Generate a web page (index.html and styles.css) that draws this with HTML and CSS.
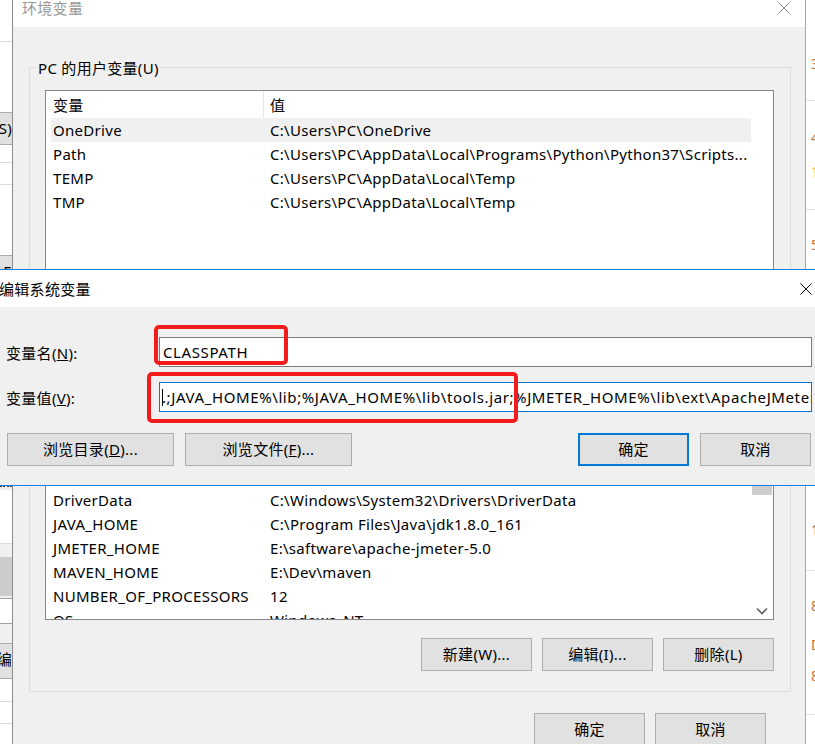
FILE: index.html
```html
<!DOCTYPE html>
<html lang="zh-CN">
<head>
    <meta charset="UTF-8">
    <title>环境变量</title>
    <link rel="stylesheet" href="styles.css">
</head>
<body>
<div class="desk">

    <!-- окно позади, слева -->
    <div class="side-left">
        <div class="sl-line" style="height:42px"></div>
        <div class="sl-gap" style="height:70px"></div>
        <div class="sl-btn" style="height:33px">(S)...</div>
        <div class="sl-line" style="height:18px"></div>
        <div class="sl-line" style="height:22px"></div>
        <div class="sl-gap" style="height:70px"></div>
        <div class="sl-btn" style="height:230px">E</div>
        <div class="sl-dots"></div>
        <div class="sl-line" style="height:54px"></div>
        <div class="sl-grey" style="height:13px"></div>
        <div class="sl-dark" style="height:41px"></div>
        <div class="sl-edit" style="height:26px"></div>
        <div class="sl-grey" style="height:19px"></div>
        <div class="sl-btn" style="height:36px">编</div>
        <div class="sl-line" style="height:23px"></div>
        <div class="sl-line" style="height:22px"></div>
    </div>

    <!-- окно позади, справа -->
    <div class="side-right">
        <div class="sr-cell" style="height:101px"><span style="top:56px">3</span></div>
        <div class="sr-cell" style="height:109px"><span style="top:29px">4</span><span class="yel" style="top:63px">1</span></div>
        <div class="sr-cell" style="height:361px"><span style="top:27px">5</span><span class="grey" style="top:312px">1</span></div>
        <div class="sr-cell" style="height:144px"><span style="top:27px">8</span><span style="top:66px">D</span><span style="top:97px">8</span></div>
    </div>

    <div class="env-win">
        <div class="env-title">
            <span>环境变量</span>
            <svg class="x-icon" width="12" height="12" viewBox="0 0 12 12"><path d="M0.5 0.5 L11.5 11.5 M11.5 0.5 L0.5 11.5" stroke="#8a8a8a" stroke-width="1"/></svg>
        </div>
        <div class="env-body">
            <div class="group">
                <div class="group-label">PC 的用户变量(U)</div>
                <div class="list list-user">
                    <div class="list-inner">
                        <div class="row head"><div>变量</div><div>值</div></div>
                        <div class="row sel"><div>OneDrive</div><div>C:\Users\PC\OneDrive</div></div>
                        <div class="row"><div>Path</div><div>C:\Users\PC\AppData\Local\Programs\Python\Python37\Scripts...</div></div>
                        <div class="row"><div>TEMP</div><div>C:\Users\PC\AppData\Local\Temp</div></div>
                        <div class="row"><div>TMP</div><div>C:\Users\PC\AppData\Local\Temp</div></div>
                    </div>
                    <div class="vscroll empty"></div>
                </div>
                <div class="btn-row">
                    <div class="btn">新建(N)...</div>
                    <div class="btn">编辑(E)...</div>
                    <div class="btn">删除(D)</div>
                </div>
            </div>

            <div class="group group-sys">
                <div class="group-label">系统变量(S)</div>
                <div class="list list-sys">
                    <div class="list-inner">
                        <div class="row head"><div>变量</div><div>值</div></div>
                        <div class="row"><div>asl.log</div><div>Destination=file</div></div>
                        <div class="row"><div>CLASSPATH</div><div>.;%JAVA_HOME%\lib;%JAVA_HOME%\lib\tools.jar</div></div>
                        <div class="row"><div>ComSpec</div><div>C:\Windows\system32\cmd.exe</div></div>
                        <div class="row"><div>DriverData</div><div>C:\Windows\System32\Drivers\DriverData</div></div>
                        <div class="row"><div>JAVA_HOME</div><div>C:\Program Files\Java\jdk1.8.0_161</div></div>
                        <div class="row"><div>JMETER_HOME</div><div>E:\saftware\apache-jmeter-5.0</div></div>
                        <div class="row"><div>MAVEN_HOME</div><div>E:\Dev\maven</div></div>
                        <div class="row"><div>NUMBER_OF_PROCESSORS</div><div>12</div></div>
                        <div class="row"><div>OS</div><div>Windows_NT</div></div>
                    </div>
                    <div class="vscroll">
                        <div class="vs-arrow"></div>
                        <div class="vs-track"><div class="vs-thumb"></div></div>
                        <div class="vs-arrow">
                            <svg width="12" height="8" viewBox="0 0 12 8"><path d="M1 1.5 L6 6.5 L11 1.5" fill="none" stroke="#606060" stroke-width="1.6"/></svg>
                        </div>
                    </div>
                </div>
                <div class="btn-row">
                    <div class="btn">新建(W)...</div>
                    <div class="btn">编辑(I)...</div>
                    <div class="btn">删除(L)</div>
                </div>
            </div>

            <div class="win-actions">
                <div class="btn">确定</div>
                <div class="btn">取消</div>
            </div>
        </div>
    </div>

    <div class="edit-dlg">
        <div class="dlg-title">
            <span>编辑系统变量</span>
            <svg class="x-icon" width="12" height="12" viewBox="0 0 12 12"><path d="M0.5 0.5 L11.5 11.5 M11.5 0.5 L0.5 11.5" stroke="#000" stroke-width="1"/></svg>
        </div>
        <div class="dlg-body">
            <div class="field">
                <label>变量名(<u>N</u>):</label>
                <div class="input">CLASSPATH</div>
            </div>
            <div class="field">
                <label>变量值(<u>V</u>):</label>
                <div class="input focus"><span class="caret"></span>.;JAVA_HOME%\lib;%JAVA_HOME%\lib\tools.jar;%JMETER_HOME%\lib\ext\ApacheJMeter_core.jar;</div>
            </div>
            <div class="dlg-buttons">
                <div class="btn wide">浏览目录(<u>D</u>)...</div>
                <div class="btn wide">浏览文件(<u>F</u>)...</div>
                <div class="spacer"></div>
                <div class="btn default">确定</div>
                <div class="btn">取消</div>
            </div>
        </div>
    </div>

    <!-- красные пометки поверх диалога -->
    <div class="mark mark-name"></div>
    <div class="mark mark-value"></div>
</div>
</body>
</html>
```

FILE: styles.css
```css
* {
    box-sizing: border-box;
}

body {
    margin: 0;
    font-family: "Noto Sans", "Noto Sans CJK SC", sans-serif;
    font-size: 15px;
    letter-spacing: 0.3px;
    color: #000;
}

.desk {
    position: relative;
    width: 815px;
    height: 744px;
    overflow: hidden;
    background: #fff;
}

/* левое окно позади */
.side-left {
    position: absolute;
    left: 0;
    top: 0;
    width: 12px;
    background: #fff;
}

    .side-left > div {
        white-space: nowrap;
        overflow: hidden;
    }

.sl-line {
    border-bottom: 1px solid #dcdcdc;
}

.sl-btn {
    background: #e1e1e1;
    border-top: 1px solid #adadad;
    border-bottom: 1px solid #adadad;
    direction: rtl;
    line-height: 31px;
    font-size: 15px;
}

.sl-dots {
    height: 5px;
    background: #f0f0f0;
    border-top: 2px dotted #3c3c3c;
}

.sl-grey {
    background: #f0f0f0;
}

.sl-dark {
    background: #cccccc;
    border-bottom: 2px solid #f0f0f0;
}

.sl-edit {
    border-top: 1px solid #a0a0a0;
    border-bottom: 1px solid #a0a0a0;
}

/* правое окно позади */
.side-right {
    position: absolute;
    left: 806px;
    top: 0;
    width: 9px;
    background: #fff;
}

.sr-cell {
    position: relative;
    border-bottom: 1px solid #e3e3e3;
}

    .sr-cell span {
        position: absolute;
        left: 5px;
        font-size: 14px;
        line-height: 16px;
        color: #c6733a;
    }

        .sr-cell span.yel {
            color: #f0c24a;
        }

        .sr-cell span.grey {
            color: #777;
        }

/* окно «环境变量» */
.env-win {
    position: absolute;
    left: 12px;
    top: 0;
    width: 794px;
    height: 780px;
    background: #f0f0f0;
    border-left: 1px solid #8c8c8c;
    border-right: 1px solid #a6a6a6;
}

.env-title {
    display: flex;
    justify-content: space-between;
    align-items: flex-start;
    height: 27px;
    padding: 0 15px 0 9px;
    background: #fff;
    color: #999;
    line-height: 16px;
}

    .env-title .x-icon {
        margin-top: 2px;
    }

.env-body {
    padding-top: 40px;
}

.group {
    margin: 0 14px 0 16px;
    padding: 0 16px 20px 15px;
    border: 1px solid #dcdcdc;
}

.group-sys {
    margin-top: 12px;
}

.group-label {
    width: fit-content;
    height: 20px;
    line-height: 20px;
    margin: -10px 0 0 -9px;
    padding: 0 2px;
    background: #f0f0f0;
}

.list {
    display: flex;
    margin-top: 12px;
    background: #fff;
    border: 1px solid #828790;
    overflow: hidden;
}

.list-user {
    height: 191px;
}

.list-sys {
    height: 232px;
}

.list-inner {
    flex: 1;
    padding-left: 5px;
    overflow: hidden;
}

.row {
    display: grid;
    grid-template-columns: 213px 1fr;
    height: 24px;
    line-height: 24px;
    white-space: nowrap;
}

    .row > div {
        overflow: hidden;
    }

        .row > div:first-child {
            padding-left: 2px;
        }

        .row > div:last-child {
            padding-left: 6px;
        }

    .row.head {
        height: 27px;
        line-height: 29px;
    }

        .row.head > div:first-child {
            border-right: 1px solid #e5e5e5;
        }

    .row.sel {
        background: #f0f0f0;
    }

.vscroll {
    display: flex;
    flex-direction: column;
    width: 22px;
    padding: 0 1px;
}

.vs-arrow {
    display: flex;
    align-items: center;
    justify-content: center;
    height: 17px;
}

.vs-track {
    flex: 1;
}

.vs-thumb {
    margin-top: 14px;
    height: 75px;
    background: #cdcdcd;
}

.btn-row {
    display: flex;
    justify-content: flex-end;
    gap: 10px;
    margin-top: 18px;
}

.btn {
    width: 111px;
    height: 33px;
    line-height: 31px;
    text-align: center;
    background: #e1e1e1;
    border: 1px solid #adadad;
    white-space: nowrap;
}

.win-actions {
    display: flex;
    justify-content: flex-end;
    gap: 10px;
    margin: 21px 39px 0 0;
}

/* диалог «编辑系统变量» */
.edit-dlg {
    position: absolute;
    left: -10px;
    top: 269px;
    width: 835px;
    border-top: 1px solid #1a7fd4;
    border-bottom: 1px solid #1a7fd4;
}

.dlg-title {
    display: flex;
    justify-content: space-between;
    align-items: center;
    height: 37px;
    padding: 0 13px 0 9px;
    background: #fff;
}

.dlg-body {
    padding: 30px 13px 19px 16px;
    background: #f0f0f0;
}

.field {
    display: grid;
    grid-template-columns: 153px 1fr;
    align-items: center;
}

    .field + .field {
        margin-top: 15px;
    }

.input {
    height: 30px;
    line-height: 28px;
    padding-left: 3px;
    background: #fff;
    border: 1px solid #7a7a7a;
    white-space: nowrap;
    overflow: hidden;
    letter-spacing: 0.6px;
}

    .input.focus {
        border-color: #0078d7;
        padding-left: 2px;
    }

.caret {
    display: inline-block;
    width: 1px;
    height: 17px;
    margin-right: -1px;
    vertical-align: -3px;
    background: #000;
}

.dlg-buttons {
    display: flex;
    margin: 21px 1px 0 1px;
}

    .dlg-buttons .wide {
        width: 167px;
        margin-right: 11px;
    }

    .dlg-buttons .spacer {
        flex: 1;
    }

    .dlg-buttons .default {
        margin-right: 11px;
        border: 2px solid #0078d7;
        line-height: 29px;
    }

/* красные рамки */
.mark {
    position: absolute;
    border: 4px solid #f21c1c;
    border-radius: 5px;
}

.mark-name {
    left: 154px;
    top: 325px;
    width: 134px;
    height: 40px;
}

.mark-value {
    left: 147px;
    top: 372px;
    width: 371px;
    height: 51px;
}
```
